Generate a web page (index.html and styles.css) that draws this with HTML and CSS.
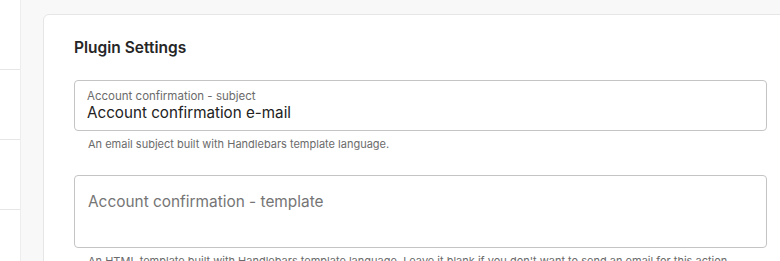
FILE: index.html
```html
<!DOCTYPE html>
<html lang="en">
<head>
  <meta charset="UTF-8">
  <title>Plugin Settings</title>
  <link rel="stylesheet" href="styles.css">
</head>
<body>
    <div class="layout">
        <!-- Side navigation strip -->
        <aside class="sidebar">
            <div class="side-row"></div>
            <div class="side-row"></div>
            <div class="side-row"></div>
            <div class="side-row"></div>
        </aside>

        <main class="content">
            <section class="card">
                <h2 class="card-title">Plugin Settings</h2>

                <div class="field">
                    <label class="input-box filled" for="subject">
                        <span class="input-label">Account confirmation - subject</span>
                        <input id="subject" type="text" value="Account confirmation e-mail">
                    </label>
                    <p class="hint">An email subject built with Handlebars template language.</p>
                </div>

                <div class="field">
                    <div class="input-box area">
                        <textarea placeholder="Account confirmation - template"></textarea>
                    </div>
                    <p class="hint">An HTML template built with Handlebars template language. Leave it blank if you don't want to send an email for this action.</p>
                </div>
            </section>
        </main>
    </div>
</body>
</html>
```

FILE: styles.css
```css
/* General Styling */
body {
    margin: 0;
    padding: 0;
    font-family: 'Inter', 'Noto Sans', sans-serif;
    background-color: #f8f8f8;
    color: #222;
    overflow: hidden;
}

.layout {
    display: flex;
    width: 798px;
    height: 261px;
    overflow: hidden;
}

/* Sidebar */
.sidebar {
    width: 20px;
    flex-shrink: 0;
    background: #ffffff;
    border-right: 1px solid #ededed;
}

.side-row {
    height: 69px;
    border-bottom: 1px solid #e6e6e6;
}

/* Content */
.content {
    flex-grow: 1;
    min-width: 0;
    padding: 14px 0 0 22px;
}

.card {
    background: #ffffff;
    border: 1px solid #e6e6e6;
    border-radius: 6px;
    padding: 22px 30px 30px 30px;
    height: 400px;
}

.card-title {
    margin: 0 0 21px 0;
    font-size: 15.5px;
    font-weight: 600;
    color: #262626;
    line-height: 22px;
}

.field {
    margin-bottom: 23px;
}

.input-box {
    display: block;
    border: 1px solid #c4c4c4;
    border-radius: 4px;
    background: #fff;
}

.input-box.filled {
    box-sizing: border-box;
    height: 51px;
    padding: 8px 12px 0 12px;
}

.input-label {
    display: block;
    font-size: 11.5px;
    line-height: 14px;
    color: #6b6b6b;
}

.input-box input {
    display: block;
    width: 100%;
    border: none;
    outline: none;
    padding: 0;
    margin: -1px 0 0 0;
    font-family: inherit;
    font-size: 15.2px;
    line-height: 22px;
    color: #222;
    background: transparent;
}

.input-box.area {
    height: 73px;
    box-sizing: border-box;
    padding: 15px 13px;
}

.input-box textarea {
    width: 100%;
    height: 100%;
    border: none;
    outline: none;
    resize: none;
    padding: 0;
    margin: 0;
    font-family: inherit;
    font-size: 15.4px;
    line-height: 22px;
    color: #222;
    background: transparent;
}

.input-box textarea::placeholder {
    color: #757575;
}

.hint {
    margin: 6px 0 0 14px;
    font-size: 11px;
    line-height: 15px;
    color: #6b6b6b;
    white-space: nowrap;
}
```
